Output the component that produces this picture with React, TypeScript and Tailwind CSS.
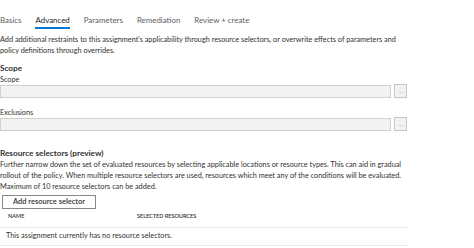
import React from "react"

const tabs = ["Basics", "Advanced", "Parameters", "Remediation", "Review + create"]

function Field({ label }: { label: string }) {
  return (
    <div className="flex flex-col">
      <div className="h-[11px] leading-[11px] text-[#323130]">{label}</div>
      <div className="flex items-start gap-[3px]">
        <div className="h-[13px] w-[391px] border border-[#d2d0ce] bg-[#f3f2f1]" />
        <div className="-mt-[1px] flex h-[14px] w-[13px] items-center justify-center border border-[#c8c6c4] bg-[#f3f2f1] text-[6px] leading-none text-[#a19f9d]">
          ...
        </div>
      </div>
    </div>
  )
}

export default function App() {
  return (
    <div
      className="h-[248px] w-[474px] overflow-hidden bg-white text-[7.3px] text-[#323130]"
      style={{ fontFamily: 'Lato, "Open Sans", sans-serif' }}
    >
      <div className="flex h-[29px] items-end gap-[14px]">
        {tabs.map((t) => (
          <div key={t} className="flex flex-col items-center">
            <div className={`text-[7.9px] leading-[12px] ${t === "Advanced" ? "text-[#201f1e]" : "text-[#605e5c]"}`}>
              {t}
            </div>
            <div className={`mt-[1px] h-[2px] w-full ${t === "Advanced" ? "bg-[#0078d4]" : "bg-transparent"}`} />
          </div>
        ))}
      </div>

      <div className="mt-[5px] leading-[11px] text-[#323130]">
        Add additional restraints to this assignment's applicability through resource selectors, or overwrite effects of parameters and
        <br />
        policy definitions through overrides.
      </div>

      <div className="mt-[6px] text-[8.2px] font-bold leading-[12px]">Scope</div>
      <Field label="Scope" />
      <div className="mt-[9px]">
        <Field label="Exclusions" />
      </div>

      <div className="mt-[16px] text-[8.2px] font-bold leading-[12px]">Resource selectors (preview)</div>
      <div className="leading-[11px]">
        Further narrow down the set of evaluated resources by selecting applicable locations or resource types. This can aid in gradual
        <br />
        rollout of the policy. When multiple resource selectors are used, resources which meet any of the conditions will be evaluated.
        <br />
        Maximum of 10 resource selectors can be added.
      </div>

      <button className="ml-[2px] mt-[3px] flex h-[14px] w-[94px] items-center justify-center border border-[#8a8886] bg-white text-[7.5px] font-semibold leading-none text-[#323130]">
        Add resource selector
      </button>

      <div className="w-[408px]">
        <div className="flex h-[19px] items-start border-b border-[#edebe9] pt-[4px] text-[5.5px] font-semibold leading-[7px] text-[#323130]">
          <div className="w-[137px] pl-[8px]">NAME</div>
          <div>SELECTED RESOURCES</div>
        </div>
        <div className="flex h-[18px] items-center border-b border-[#edebe9] pl-[6px]">
          This assignment currently has no resource selectors.
        </div>
      </div>
    </div>
  )
}
